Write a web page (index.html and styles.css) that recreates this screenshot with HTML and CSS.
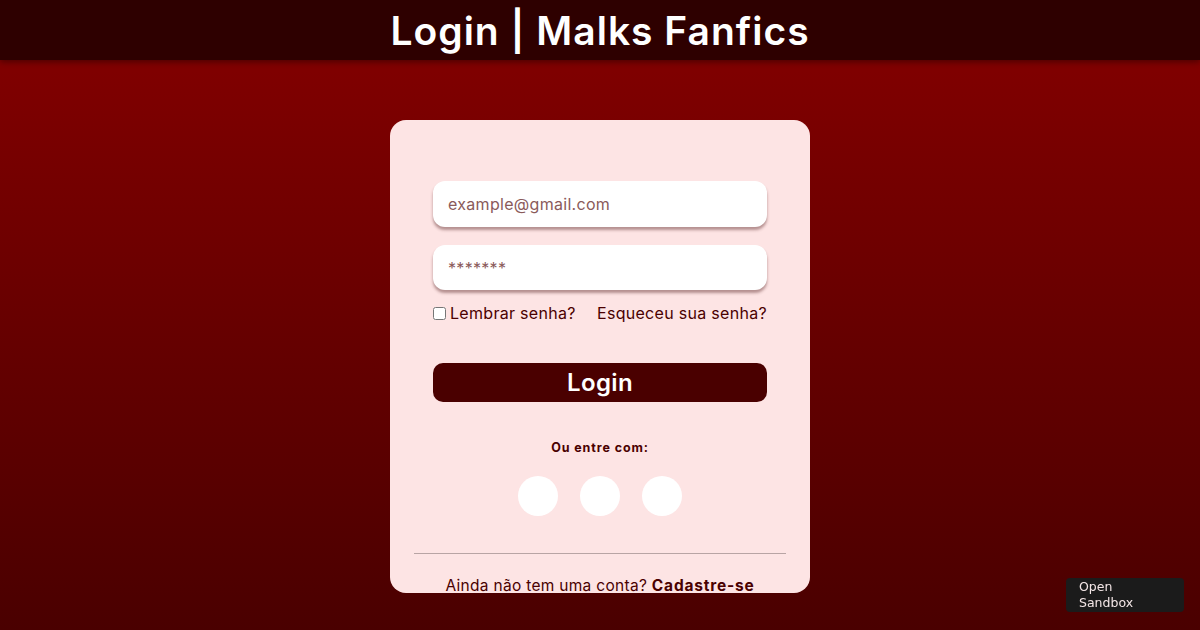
FILE: index.html
```html
<!DOCTYPE html>
<html lang="pt-BR">
<head>
    <meta charset="UTF-8">
    <meta name="viewport" content="width=device-width, initial-scale=1.0">
    <title>Login | Malks Fanfics</title>
    <link rel="stylesheet" href="styles.css">
</head>
<body>
    <header class="topbar">
        <h1>Login | Malks Fanfics</h1>
    </header>

    <main class="page">
        <form class="card">
            <input class="field" type="email" placeholder="example@gmail.com">
            <input class="field" type="password" placeholder="*******">

            <div class="options">
                <label class="remember"><input type="checkbox"> Lembrar senha?</label>
                <a href="#" class="forgot">Esqueceu sua senha?</a>
            </div>

            <button type="button" class="btn-login">Login</button>

            <p class="alt-title">Ou entre com:</p>
            <div class="socials">
                <span class="social"></span>
                <span class="social"></span>
                <span class="social"></span>
            </div>

            <hr class="divider">
            <p class="signup">Ainda não tem uma conta? <b>Cadastre-se</b></p>
        </form>
    </main>

    <a href="#" class="sandbox">Open<br>Sandbox</a>
</body>
</html>
```

FILE: styles.css
```css
* {
    box-sizing: border-box;
}
body {
    margin: 0;
    height: 630px;
    overflow: hidden;
    font-family: Inter, "Noto Sans", sans-serif;
    background: linear-gradient(to bottom, #2e0000 0, #2e0000 60px, #800000 60px, #4a0000 100%);
}
.topbar {
    height: 60px;
    background: #2e0000;
    box-shadow: 0 2px 6px rgba(0, 0, 0, 0.4);
    display: flex;
    align-items: center;
    justify-content: center;
}
.topbar h1 {
    margin: 0;
    color: #fff;
    font-size: 39px;
    font-weight: 600;
    letter-spacing: 1px;
}
.page {
    display: flex;
    justify-content: center;
    padding-top: 60px;
}
.card {
    width: 420px;
    height: 473px;
    overflow: hidden;
    background: #fde4e4;
    border-radius: 16px;
    padding: 61px 43px 0;
    display: flex;
    flex-direction: column;
}
.field {
    flex: none;
    height: 46px;
    border: none;
    border-radius: 12px;
    background: #fff;
    padding: 0 15px;
    font-family: inherit;
    font-size: 16px;
    color: #4a0000;
    box-shadow: 0 3px 3px rgba(90, 40, 40, 0.45);
    margin-bottom: 18px;
    outline: none;
}
.field::placeholder {
    color: #8a5a5a;
    letter-spacing: 0.3px;
}
.field[type="password"] {
    height: 45px;
    margin-bottom: 12px;
}
.options {
    flex: none;
    display: flex;
    justify-content: space-between;
    align-items: center;
    font-size: 16px;
    letter-spacing: 0.3px;
    color: #4a0000;
    height: 22px;
}
.remember {
    display: flex;
    align-items: center;
    gap: 4px;
}
.remember input {
    margin: 0;
    width: 13px;
    height: 13px;
}
.forgot {
    color: #4a0000;
    text-decoration: none;
}
.btn-login {
    flex: none;
    margin-top: 39px;
    height: 39px;
    border: none;
    border-radius: 10px;
    background: #4a0000;
    color: #fff;
    font-family: inherit;
    font-size: 24px;
    font-weight: 600;
    letter-spacing: 0.4px;
    padding: 0;
    cursor: pointer;
}
.alt-title {
    flex: none;
    margin: 38px 0 0;
    text-align: center;
    font-size: 12.5px;
    font-weight: 700;
    color: #4a0000;
    letter-spacing: 0.9px;
}
.socials {
    flex: none;
    display: flex;
    justify-content: center;
    gap: 22px;
    margin-top: 21px;
}
.social {
    width: 40px;
    height: 40px;
    border-radius: 50%;
    background: #fff;
}
.divider {
    flex: none;
    margin: 37px -19px 0;
    border: none;
    border-top: 1px solid #b8a4a4;
    height: 0;
}
.signup {
    flex: none;
    margin: 22px 0 0;
    text-align: center;
    font-size: 15.5px;
    letter-spacing: 0.3px;
    color: #4a0000;
}
.signup b {
    letter-spacing: 0.8px;
}
.sandbox {
    position: fixed;
    right: 16px;
    bottom: 18px;
    width: 118px;
    height: 34px;
    background: #1b1b1b;
    border-radius: 4px;
    color: #f3e6e6;
    text-decoration: none;
    font-family: "DejaVu Sans", sans-serif;
    font-size: 12.5px;
    line-height: 16px;
    padding: 1px 13px;
}
```
